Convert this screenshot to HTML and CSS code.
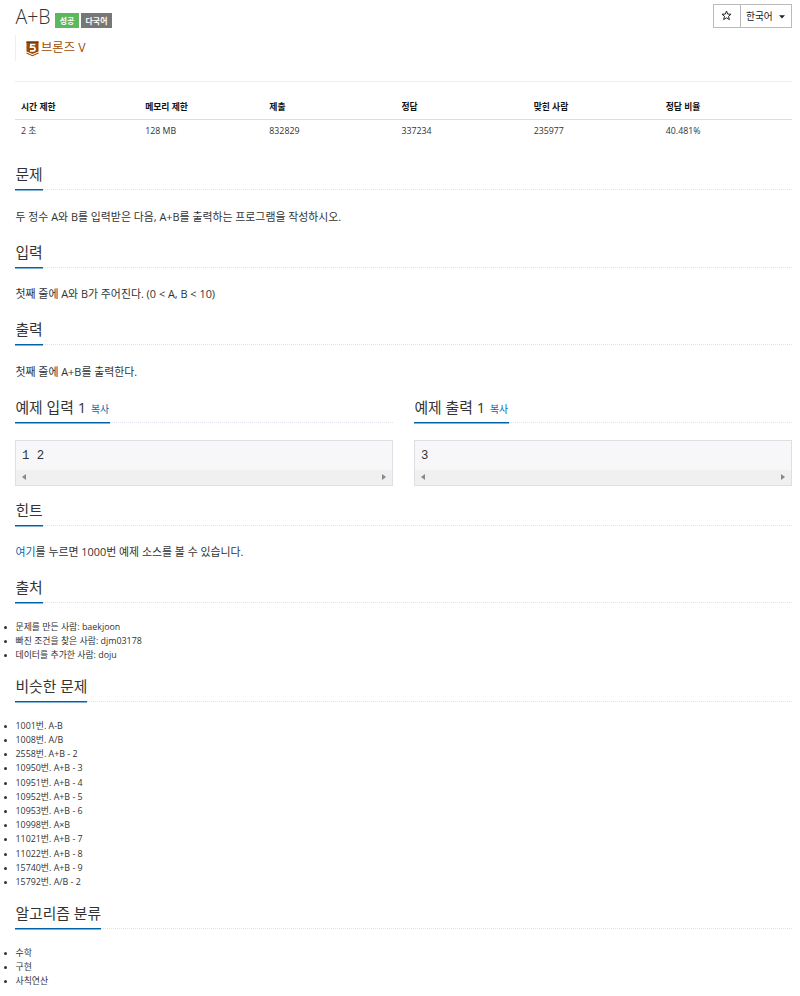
FILE: index.html
```html
<!DOCTYPE html>
<html lang="ko">
<head>
<meta charset="utf-8">
<title>A+B</title>
<link rel="stylesheet" href="styles.css">
</head>
<body>
<main class="page">
  <header class="top">
    <div>
      <div class="title-row"><h1>A+B</h1><span class="label success">성공</span><span class="label multi">다국어</span></div>
      <div class="tier">
        <svg class="tier-icon" viewBox="0 0 13 16"><path d="M.5.5h12v10L6.500 13 .5 10.500z" fill="#a04a00"/><path d="M.5.5h12v1.500H.5z" fill="#743600"/><path d="M.5 12 6.500 14.700l6-2.700" fill="none" stroke="#a04a00" stroke-width="1.100"/><path d="M9.300 3.500H4.900L4.600 6.200H7.400C9.600 6.200 9.600 9.900 7.200 9.900H4" fill="none" stroke="#fff" stroke-width="1.700"/></svg>
        <span class="tier-name">브론즈 V</span>
      </div>
    </div>
    <div class="buttons">
      <button class="star" aria-label="star"><svg width="11" height="11" viewBox="0 0 11 11"><path d="M5.500 1 6.700 4.100 10 4.200 7.500 6.300 8.400 9.600 5.500 7.800 2.600 9.600 3.500 6.300 1 4.200 4.300 4.100z" fill="none" stroke="#222" stroke-width="1"/></svg></button>
      <button class="lang">한국어<svg width="6" height="4" viewBox="0 0 6 4"><path d="M0 .3h6L3 3.500z" fill="#222"/></svg></button>
    </div>
  </header>

  <table class="info">
    <thead><tr><th class="narrow">시간 제한</th><th class="narrow">메모리 제한</th><th>제출</th><th>정답</th><th>맞힌 사람</th><th>정답 비율</th></tr></thead>
    <tbody><tr><td>2 초</td><td>128 MB</td><td>832829</td><td>337234</td><td>235977</td><td>40.481%</td></tr></tbody>
  </table>

  <section class="text-section">
    <div class="headline"><h2>문제</h2></div>
    <p>두 정수 A와 B를 입력받은 다음, A+B를 출력하는 프로그램을 작성하시오.</p>
  </section>
  <section class="text-section">
    <div class="headline"><h2>입력</h2></div>
    <p>첫째 줄에 A와 B가 주어진다. (0 &lt; A, B &lt; 10)</p>
  </section>
  <section class="text-section">
    <div class="headline"><h2>출력</h2></div>
    <p>첫째 줄에 A+B를 출력한다.</p>
  </section>

  <div class="samples">
    <section>
      <div class="headline"><h2>예제 입력 1 <a class="copy">복사</a></h2></div>
      <div class="sample"><pre>1 2</pre><div class="scroll"><i class="arrow left"></i><i class="arrow right"></i></div></div>
    </section>
    <section>
      <div class="headline"><h2>예제 출력 1 <a class="copy">복사</a></h2></div>
      <div class="sample"><pre>3</pre><div class="scroll"><i class="arrow left"></i><i class="arrow right"></i></div></div>
    </section>
  </div>

  <section class="text-section">
    <div class="headline"><h2>힌트</h2></div>
    <p><a>여기</a>를 누르면 1000번 예제 소스를 볼 수 있습니다.</p>
  </section>
  <section class="list-section">
    <div class="headline"><h2>출처</h2></div>
    <ul><li>문제를 만든 사람: baekjoon</li><li>빠진 조건을 찾은 사람: djm03178</li><li>데이터를 추가한 사람: doju</li></ul>
  </section>
  <section class="list-section">
    <div class="headline"><h2>비슷한 문제</h2></div>
    <ul>
      <li>1001번. A-B</li><li>1008번. A/B</li><li>2558번. A+B - 2</li><li>10950번. A+B - 3</li>
      <li>10951번. A+B - 4</li><li>10952번. A+B - 5</li><li>10953번. A+B - 6</li><li>10998번. A×B</li>
      <li>11021번. A+B - 7</li><li>11022번. A+B - 8</li><li>15740번. A+B - 9</li><li>15792번. A/B - 2</li>
    </ul>
  </section>
  <section class="list-section">
    <div class="headline"><h2>알고리즘 분류</h2></div>
    <ul><li>수학</li><li>구현</li><li>사칙연산</li></ul>
  </section>
</main>
</body>
</html>
```
FILE: styles.css
```css
* { box-sizing: border-box; }
body {
  margin: 0;
  background: #fff;
  color: #333;
  font-family: "Open Sans", "Noto Sans CJK KR", sans-serif;
  font-size: 10.900px;
  height: 996px;
  overflow: hidden;
}
h1, h2, p, ul, pre { margin: 0; padding: 0; font-weight: 400; }
a { color: #0068b0; }
.page { padding: 0 8px 0 15px; }

.top {
  display: flex;
  justify-content: space-between;
  height: 82px;
  border-bottom: 1px solid #eee;
}
.title-row { display: flex; align-items: flex-start; height: 35px; }
h1 { width: 40px; padding: 5px 0 0 0.500px; font-size: 19.500px; font-weight: 300; line-height: 24px; white-space: nowrap; }
.label {
  height: 15px;
  margin-top: 13px;
  color: #fff;
  font-size: 7.900px;
  font-weight: 700;
  line-height: 16px;
  text-align: center;
}
.success { width: 24px; background: #5cb85c; }
.multi { width: 31px; margin-left: 2px; background: #777; }
.tier {
  display: flex;
  align-items: center;
  height: 26px;
  padding-left: 9px;
  border-left: 1px solid #eee;
  color: #a04a00;
  font-size: 12.300px;
}
.tier-icon { width: 13px; height: 16px; margin: 1px 2px 0 1px; }
.tier-name { line-height: 24px; }
.buttons { display: flex; height: 24px; margin-top: 4px; }
.buttons button {
  display: flex;
  align-items: center;
  padding: 0;
  border: 1px solid #bbb;
  background: #fff;
  color: #222;
  font: inherit;
  font-size: 9.700px;
}
.buttons .star { width: 28px; justify-content: center; padding: 0 1px 2px 0; }
.buttons .lang { width: 52px; margin-left: -1px; justify-content: space-between; padding: 0 6px 1px 5px; }
.lang svg { margin-top: 2px; }

.info {
  width: 777px;
  margin-top: 11px;
  border-collapse: collapse;
  table-layout: fixed;
  font-size: 8.800px;
}
.info th, .info td { padding: 0 6px; text-align: left; line-height: 14px; }
.info th { width: 132px; height: 26px; padding-top: 2px; color: #111; border-bottom: 1px solid #ddd; }
.info .narrow { width: 124px; }
.info td { height: 23px; padding-top: 1px; }

.headline { height: 28px; border-bottom: 1px dotted #dfe2e8; }
.headline h2 {
  display: inline-block;
  height: 28px;
  padding-left: 0.500px;
  border-bottom: 1px solid #0064ab;
  box-shadow: 0 0.500px 0 #0064ab;
  font-size: 14.800px;
  line-height: 24px;
  white-space: nowrap;
  vertical-align: top;
}
.copy { margin-left: 1px; font-size: 9.800px; }
.text-section { height: 77.500px; }
.info + .text-section { margin-top: 20px; }
.text-section p { padding: 17.500px 0 0 0.500px; line-height: 18px; white-space: nowrap; }

.samples { display: grid; grid-template-columns: 378px 378px; column-gap: 21px; height: 103px; }
.samples h2 { padding-right: 1px; }
.sample { height: 46px; margin-top: 17px; border: 1px solid #dedee4; background: #f7f7f9; }
.sample pre {
  height: 29px;
  padding: 1px 0 0 6px;
  font: 12.300px/29px "Liberation Mono", monospace;
}
.scroll {
  display: flex;
  justify-content: space-between;
  align-items: center;
  height: 15px;
  padding: 0 6px;
  background: #f0f0f0;
}
.arrow { border: 3.500px solid transparent; }
.left { border-left-width: 0; border-right: 4px solid #888; }
.right { border-right-width: 0; border-left: 4px solid #888; }

.list-section ul { padding: 16.500px 0 12.300px; list-style: none; font-size: 8.900px; }
.list-section li { position: relative; height: 14.200px; padding-left: 0.500px; line-height: 14.200px; white-space: nowrap; }
.list-section li::before {
  content: "";
  position: absolute;
  top: 6px;
  left: -11.500px;
  width: 3px;
  height: 3px;
  border-radius: 50%;
  background: #333;
}
```
